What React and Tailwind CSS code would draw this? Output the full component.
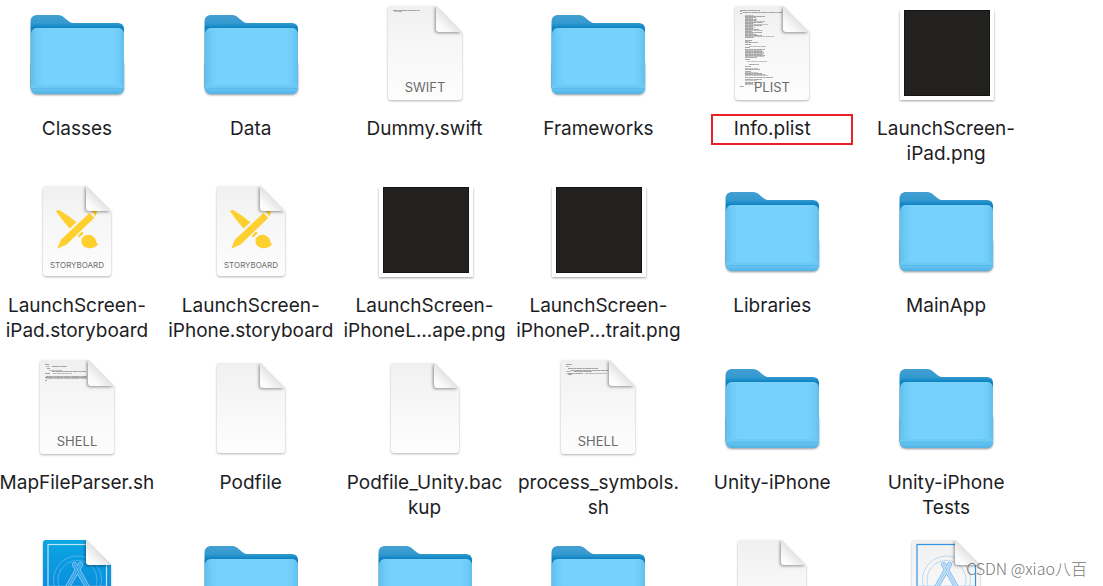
import React, { useId } from "react";

const FILES = [
  { kind: "folder", name: ["Classes"] },
  { kind: "folder", name: ["Data"] },
  { kind: "doc", label: "SWIFT", code: "swift", name: ["Dummy.swift"] },
  { kind: "folder", name: ["Frameworks"] },
  { kind: "doc", label: "PLIST", code: "plist", name: ["Info.plist"], marked: true },
  { kind: "image", name: ["LaunchScreen-", "iPad.png"] },
  { kind: "storyboard", name: ["LaunchScreen-", "iPad.storyboard"] },
  { kind: "storyboard", name: ["LaunchScreen-", "iPhone.storyboard"] },
  { kind: "image", name: ["LaunchScreen-", "iPhoneL...ape.png"] },
  { kind: "image", name: ["LaunchScreen-", "iPhoneP...trait.png"] },
  { kind: "folder", name: ["Libraries"] },
  { kind: "folder", name: ["MainApp"] },
  { kind: "doc", label: "SHELL", code: "map", name: ["MapFileParser.sh"] },
  { kind: "blank", name: ["Podfile"] },
  { kind: "blank", name: ["Podfile_Unity.bac", "kup"] },
  { kind: "doc", label: "SHELL", code: "symbols", name: ["process_symbols.", "sh"] },
  { kind: "folder", name: ["Unity-iPhone"] },
  { kind: "folder", name: ["Unity-iPhone", "Tests"] },
  { kind: "project", name: [] },
  { kind: "folder", name: [] },
  { kind: "folder", name: [] },
  { kind: "folder", name: [] },
  { kind: "blank", name: [] },
  { kind: "workspace", name: [] },
];

// [x, y, width] of each line of code in a document preview
const CODE_LINES = {
  swift: [[20, 10, 27], [21, 11, 3], [25, 11, 4]],
  map: [
    [20, 10, 4], [21, 12, 4], [27, 12, 15], [22, 14, 3], [24, 16, 13], [27, 17, 34],
    [20, 19, 5], [28, 19, 19], [21, 22, 41], [20, 23, 41], [21, 24, 41], [20, 26, 2],
  ],
  symbols: [
    [20, 10, 6], [20, 12, 3], [22, 14, 30], [25, 16, 37], [20, 17, 5], [28, 17, 18],
    [21, 19, 16], [39, 19, 22], [22, 20, 4],
  ],
  plist: [
    [20, 10, 20], [20, 11, 2], [23, 12, 39], [20, 13, 2], [25, 15, 9], [25, 16, 20], [25, 17, 11],
    [25, 18, 8], [25, 19, 12], [25, 20, 11], [25, 21, 20], [25, 22, 18], [25, 23, 9], [25, 24, 23],
    [25, 25, 17], [25, 26, 8], [25, 27, 10], [25, 28, 8], [25, 29, 14], [25, 30, 18], [25, 31, 7],
    [25, 32, 17], [25, 33, 9], [25, 34, 12], [25, 35, 17], [25, 36, 29], [25, 37, 9], [25, 40, 7],
    [25, 41, 5], [25, 42, 13], [25, 44, 6], [29, 46, 17], [25, 47, 5], [25, 49, 20], [25, 50, 17],
    [25, 51, 18], [25, 52, 19], [25, 53, 19], [25, 54, 18], [25, 55, 20], [25, 56, 19], [25, 57, 12],
    [25, 59, 5], [27, 61, 20], [29, 64, 10], [25, 66, 6], [25, 68, 13], [25, 69, 15], [25, 71, 6],
    [25, 72, 13], [25, 73, 17], [25, 74, 20], [25, 75, 23], [25, 77, 28], [25, 79, 17], [25, 80, 12],
    [25, 82, 18], [25, 83, 8], [25, 84, 11], [20, 86, 4],
  ],
};

const Icon = ({ children }) => (
  <svg className="h-28 w-[104px] shrink-0" viewBox="0 0 104 112" fill="none" aria-hidden="true">
    {children}
  </svg>
);

const FolderIcon = () => {
  const id = useId();
  return (
    <Icon>
      <defs>
        <linearGradient id={`${id}back`} x1="0" y1="15" x2="0" y2="31" gradientUnits="userSpaceOnUse">
          <stop offset="0" stopColor="#459fd3" />
          <stop offset="0.5" stopColor="#339acf" />
          <stop offset="0.8" stopColor="#0e83c4" />
          <stop offset="1" stopColor="#1481bd" />
        </linearGradient>
        <linearGradient id={`${id}side`} x1="6" y1="0" x2="99" y2="0" gradientUnits="userSpaceOnUse">
          <stop offset="0" stopColor="#62bfed" />
          <stop offset="0.06" stopColor="#6ecbf7" />
          <stop offset="0.13" stopColor="#76d1fc" />
          <stop offset="0.88" stopColor="#76d1fc" />
          <stop offset="0.95" stopColor="#6ecbf7" />
          <stop offset="1" stopColor="#62bfed" />
        </linearGradient>
        <linearGradient id={`${id}foot`} x1="0" y1="84" x2="0" y2="94" gradientUnits="userSpaceOnUse">
          <stop offset="0" stopColor="#66c5f3" />
          <stop offset="0.2" stopColor="#6ecbf7" />
          <stop offset="0.5" stopColor="#64c3f1" />
          <stop offset="1" stopColor="#52b2e2" />
        </linearGradient>
        <clipPath id={`${id}clip`}>
          <rect x="6" y="28" width="93" height="66" rx="6" />
        </clipPath>
        <filter id={`${id}soft`} x="-10%" y="-10%" width="120%" height="130%">
          <feGaussianBlur stdDeviation="1" />
        </filter>
      </defs>
      <rect x="6" y="60" width="93" height="35" rx="6" fill="#3b4a55" fillOpacity="0.6" filter={`url(#${id}soft)`} />
      <path
        d="M5.500 22C5.500 17.500 8 15 12.500 15H32C35 15 36.500 15.600 38.500 17L43 20.700C45 22.500 46.500 23 49 23H92C96.500 23 99 25 99 29V86C99 91 96.500 94 91 94H13C8 94 5.500 91 5.500 86Z"
        fill={`url(#${id}back)`}
      />
      <rect x="6" y="28" width="93" height="66" rx="6" fill={`url(#${id}side)`} />
      <g clipPath={`url(#${id}clip)`}>
        <rect x="6" y="85" width="93" height="9" fill={`url(#${id}foot)`} />
        <path d="M8 29H97" stroke="#7dcff3" strokeWidth="1" />
        <path d="M6 88.500H99" stroke="#52b4e5" strokeWidth="0.600" />
      </g>
    </Icon>
  );
};

// Sheet of paper with its top right corner curled over
const Sheet = ({ x, y, width, height, fold, fill, children }) => {
  const id = useId();
  const right = x + width;
  const bottom = y + height;
  const foldX = right - fold;
  const foldY = y + fold;
  const outline = `M${x + 3} ${y}H${foldX}L${right} ${foldY}V${bottom - 3}Q${right} ${bottom} ${right - 3} ${bottom}H${x + 3}Q${x} ${bottom} ${x} ${bottom - 3}V${y + 3}Q${x} ${y} ${x + 3} ${y}Z`;
  const curl = `M${foldX} ${y}Q${foldX + 1} ${y} ${foldX + 3} ${y + 2}L${right - 2} ${foldY - 2}Q${right} ${foldY} ${right} ${foldY}H${foldX + 3}Q${foldX} ${foldY} ${foldX} ${foldY - 3}Z`;
  return (
    <>
      <defs>
        <linearGradient id={`${id}paper`} x1="0" y1="0" x2="0" y2="1">
          <stop offset="0" stopColor="#f0f0f0" />
          <stop offset="0.45" stopColor="#f7f7f7" />
          <stop offset="1" stopColor="#fdfdfd" />
        </linearGradient>
        <linearGradient id={`${id}curl`} x1="0" y1="1" x2="0.5" y2="0.5">
          <stop offset="0" stopColor="#ffffff" />
          <stop offset="0.45" stopColor="#fafafa" />
          <stop offset="1" stopColor="#e4e4e4" />
        </linearGradient>
        <filter id={`${id}drop`} x="-10%" y="-10%" width="120%" height="120%">
          <feGaussianBlur stdDeviation="0.900" />
        </filter>
        <filter id={`${id}shade`} x="-40%" y="-40%" width="180%" height="180%">
          <feGaussianBlur stdDeviation="1.800" />
        </filter>
        <clipPath id={`${id}clip`}>
          <path d={outline} />
        </clipPath>
      </defs>
      <path d={outline} transform="translate(0 1)" fill="#000000" fillOpacity="0.3" filter={`url(#${id}drop)`} />
      <path d={outline} fill={fill || `url(#${id}paper)`} />
      <g clipPath={`url(#${id}clip)`}>
        {children}
        <path d={curl} transform="translate(-1 1)" fill="#000000" fillOpacity="0.42" filter={`url(#${id}shade)`} />
      </g>
      <path d={curl} fill={`url(#${id}curl)`} />
    </>
  );
};

const DocIcon = ({ label, code }) => (
  <Icon>
    <Sheet x={15} y={6} width={74} height={94} fold={26}>
      {CODE_LINES[code].map(([x, y, width], i) => (
        <path
          key={i}
          d={`M${x} ${y + 0.5}h${width}`}
          stroke="#666666"
          strokeOpacity={i % 3 === 1 ? 0.5 : 0.7}
          strokeWidth="0.800"
          strokeDasharray={i % 2 ? "3 0.400 5 0.300" : "6 0.300 2 0.400"}
        />
      ))}
    </Sheet>
    <text x="52" y="92" textAnchor="middle" className="fill-[#6b6b6b] font-['Inter',sans-serif] text-[13px]">
      {label}
    </text>
  </Icon>
);

const BlankIcon = () => (
  <Icon>
    <Sheet x={18} y={9} width={68} height={90} fold={25} />
  </Icon>
);

const StoryboardIcon = () => (
  <Icon>
    <Sheet x={18} y={9} width={68} height={90} fold={25}>
      <g fill="#fdd02f">
        <path d="M31.200 34.500Q32 32.500 34.500 33.200Q43 38 51.500 45.300L44.600 51.500Q37 43 31.200 34.500Z" />
        <path d="M32.300 71.800L35.800 62.800L64.500 36L69.400 40.800L41.600 67.600Z" />
        <path d="M66.500 34L71.500 33.500Q72.500 36 70.500 39.500Z" />
        <path d="M52.700 59L57 54.400Q58.300 55 58.600 56.200L54.600 60.200Q53.300 60 52.700 59Z" />
        <path d="M57 61Q60 57.200 64.500 57.700Q69.500 58.600 71 63.500Q71.500 67 73.200 67.600Q69 71.800 63.500 71.200Q58 70.500 56.600 66Q56.100 62.800 57 61Z" />
      </g>
    </Sheet>
    <text x="52" y="91" textAnchor="middle" className="fill-[#6b6b6b] font-['Inter',sans-serif] text-[8px]">
      STORYBOARD
    </text>
  </Icon>
);

const ImageIcon = () => {
  const id = useId();
  return (
    <Icon>
      <defs>
        <filter id={id} x="-10%" y="-10%" width="120%" height="120%">
          <feGaussianBlur stdDeviation="1.200" />
        </filter>
      </defs>
      <rect x="6" y="11" width="94" height="90" fill="#000000" fillOpacity="0.38" filter={`url(#${id})`} />
      <rect x="6" y="6" width="94" height="94" fill="#ffffff" />
      <rect x="10" y="10" width="86" height="86" fill="#22211f" />
      <rect x="10.500" y="10.500" width="85" height="85" stroke="#141413" />
    </Icon>
  );
};

// Blueprint artwork shared by the project and workspace documents
const Blueprint = ({ frame, line, tint }) => (
  <g stroke={line} strokeWidth="0.800">
    <rect x="23" y="13.500" width="58.500" height="81" stroke={frame} strokeWidth="1.200" />
    <circle cx="52.500" cy="49" r="24" strokeOpacity="0.6" />
    <circle cx="52.500" cy="49" r="19.500" strokeOpacity="0.6" />
    <path d="M23 55H81" strokeOpacity="0.5" />
    <g strokeLinecap="round">
      <path d="M49.500 33.500L67 64M55.500 33.500L38 64" strokeWidth="5" />
      <path d="M49.500 33.500L67 64M55.500 33.500L38 64" stroke={tint} strokeWidth="3.500" />
      <path d="M49.500 33.500L67 64M55.500 33.500L38 64" strokeWidth="0.600" />
    </g>
  </g>
);

const ProjectIcon = () => {
  const id = useId();
  return (
    <Icon>
      <defs>
        <linearGradient id={id} x1="0" y1="0" x2="0" y2="1">
          <stop offset="0" stopColor="#0aa6e2" />
          <stop offset="1" stopColor="#0a78dc" />
        </linearGradient>
      </defs>
      <Sheet x={18} y={9} width={68} height={90} fold={25} fill={`url(#${id})`}>
        <Blueprint frame="#bfe5f8" line="#8fcff3" tint="#2a9fe4" />
      </Sheet>
    </Icon>
  );
};

const WorkspaceIcon = () => (
  <Icon>
    <Sheet x={18} y={9} width={68} height={90} fold={25}>
      <Blueprint frame="#2f93e8" line="#7ab8ee" tint="#cbe3f7" />
    </Sheet>
  </Icon>
);

const ICONS = {
  folder: FolderIcon,
  doc: DocIcon,
  blank: BlankIcon,
  storyboard: StoryboardIcon,
  image: ImageIcon,
  project: ProjectIcon,
  workspace: WorkspaceIcon,
};

const FileItem = ({ file }) => {
  const FileIcon = ICONS[file.kind];
  return (
    <li className="relative flex min-w-0 flex-col items-center gap-1">
      <FileIcon label={file.label} code={file.code} />
      <p className="min-h-[50px] text-center text-[19px] leading-[25px] whitespace-nowrap">
        {file.name.map((line) => (
          <span key={line} className="block">
            {line}
          </span>
        ))}
      </p>
      {file.marked && (
        <span className="absolute top-[114px] left-4 h-[31px] w-[142px] border-2 border-[#e8202a]" />
      )}
    </li>
  );
};

const App = () => {
  return (
    <main className="relative h-screen overflow-hidden bg-white font-['Inter','Noto_Sans_CJK_SC',sans-serif] text-[#1d1d1f]">
      <ul className="grid grid-cols-6 gap-x-5 gap-y-[11px] pr-20">
        {FILES.map((file, i) => (
          <FileItem key={i} file={file} />
        ))}
      </ul>
      <span className="absolute right-4 bottom-1.5 font-['Noto_Sans_CJK_SC',sans-serif] text-base leading-6 font-light text-[#777777]">
        CSDN @xiao八百
      </span>
    </main>
  );
};

export default App;
